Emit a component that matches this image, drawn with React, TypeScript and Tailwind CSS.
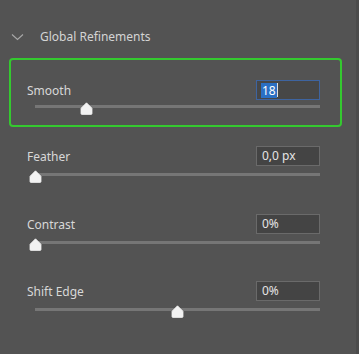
import React from "react";

type Row = {
  label: string;
  value: string;
  pct: number;
  active?: boolean;
};

const rows: Row[] = [
  { label: "Smooth", value: "18", pct: 18, active: true },
  { label: "Feather", value: "0,0 px", pct: 0 },
  { label: "Contrast", value: "0%", pct: 0 },
  { label: "Shift Edge", value: "0%", pct: 50 },
];

const Thumb = ({ pct }: { pct: number }) => (
  <svg
    width="13"
    height="13"
    viewBox="0 0 13 13"
    className="absolute top-0"
    style={{ left: `calc(${pct}% - 6.5px)` }}
  >
    <path
      d="M6.5 0.8 L12 6.3 L12 11.6 Q12 12.4 11.2 12.4 L1.8 12.4 Q1 12.4 1 11.6 L1 6.3 Z"
      fill="#f2f2f2"
      stroke="#f2f2f2"
      strokeWidth="0.8"
      strokeLinejoin="round"
    />
  </svg>
);

const Slider = ({ row }: { row: Row }) => (
  <div
    className={`pl-[16px] pr-[20px] ${row.active ? "pt-[20px] pb-[10px]" : ""}`}
  >
    <div className="flex items-center justify-between h-[20px]">
      <span className="text-[12px] text-[#d8d8d8] translate-y-[1px]">{row.label}</span>
      <div
        className={`w-[64px] h-[20px] flex items-center px-[4px] text-[12px] ${
          row.active
            ? "border border-[#3e64a0] bg-[#474747]"
            : "border border-[#6a6a6a] bg-[#444444]"
        }`}
      >
        {row.active ? (
          <>
            <span className="bg-[#2a6fc4] text-white px-[1px] leading-[15px]">
              {row.value}
            </span>
            <span className="w-px h-[14px] bg-[#e0e0e0]" />
          </>
        ) : (
          <span className="text-[#e4e4e4] pl-[1px]">{row.value}</span>
        )}
      </div>
    </div>
    <div className={`ml-[8px] relative h-[13px] ${row.active ? "mt-[2px]" : "mt-[4px]"}`}>
      <div className="absolute left-0 right-0 top-[3px] h-[3px] bg-[#767676]" />
      <Thumb pct={row.pct} />
    </div>
  </div>
);

const App = () => {
  return (
    <div
      className="w-[359px] h-[354px] bg-[#535353] flex"
      style={{ fontFamily: '"Noto Sans", "Open Sans", sans-serif' }}
    >
      <div className="w-[356px]">
        <div className="mt-[27px] h-[20px] flex items-center">
          <svg width="13" height="8" viewBox="0 0 13 8" className="ml-[11px]">
            <path d="M1 1.5 L6.5 6.5 L12 1.5" fill="none" stroke="#a8a8a8" strokeWidth="1.1" />
          </svg>
          <span className="ml-[16px] text-[12px] text-[#d4d4d4]">Global Refinements</span>
        </div>
        <div className="ml-[9px] w-[333px] mt-[11px]">
          <div className="border-2 border-[#34c92f] rounded-[4px] h-[69px]">
            <Slider row={rows[0]} />
          </div>
          <div className="border-2 border-transparent mt-[17px]">
            <Slider row={rows[1]} />
          </div>
          <div className="border-2 border-transparent mt-[27px]">
            <Slider row={rows[2]} />
          </div>
          <div className="border-2 border-transparent mt-[26px]">
            <Slider row={rows[3]} />
          </div>
        </div>
      </div>
      <div className="w-[3px] bg-[#4b4b4b]" />
    </div>
  );
};

export default App;
